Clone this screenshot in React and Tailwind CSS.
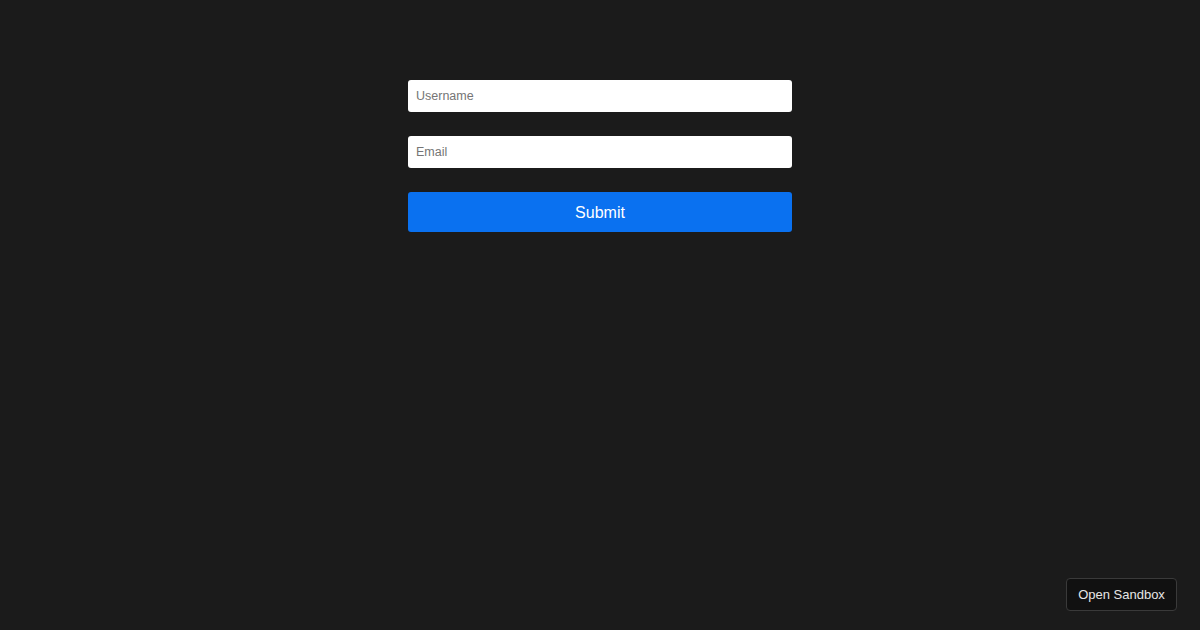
export default function App() {
  return (
    <div className="relative min-h-[630px] w-full bg-[#1b1b1b] font-['Liberation_Sans',Arial,sans-serif]">
      <form
        className="mx-auto flex w-[384px] flex-col gap-6 pt-20"
        onSubmit={(e) => e.preventDefault()}
      >
        <input
          type="text"
          placeholder="Username"
          className="h-8 w-full rounded-[3px] bg-white px-2 pb-px text-[12.5px] text-black outline-none placeholder:text-[#757575]"
        />
        <input
          type="email"
          placeholder="Email"
          className="h-8 w-full rounded-[3px] bg-white px-2 pb-px text-[12.5px] text-black outline-none placeholder:text-[#757575]"
        />
        <button
          type="submit"
          className="h-10 w-full rounded-[3px] bg-[#0a71f0] pt-px text-[16px] text-white"
        >
          Submit
        </button>
      </form>

      <button className="absolute bottom-[19px] right-[23px] h-[33px] w-[111px] rounded-[4px] border border-[#3a3a3a] bg-[#111111] text-[13px] text-[#e6e6e6]">
        Open Sandbox
      </button>
    </div>
  );
}
